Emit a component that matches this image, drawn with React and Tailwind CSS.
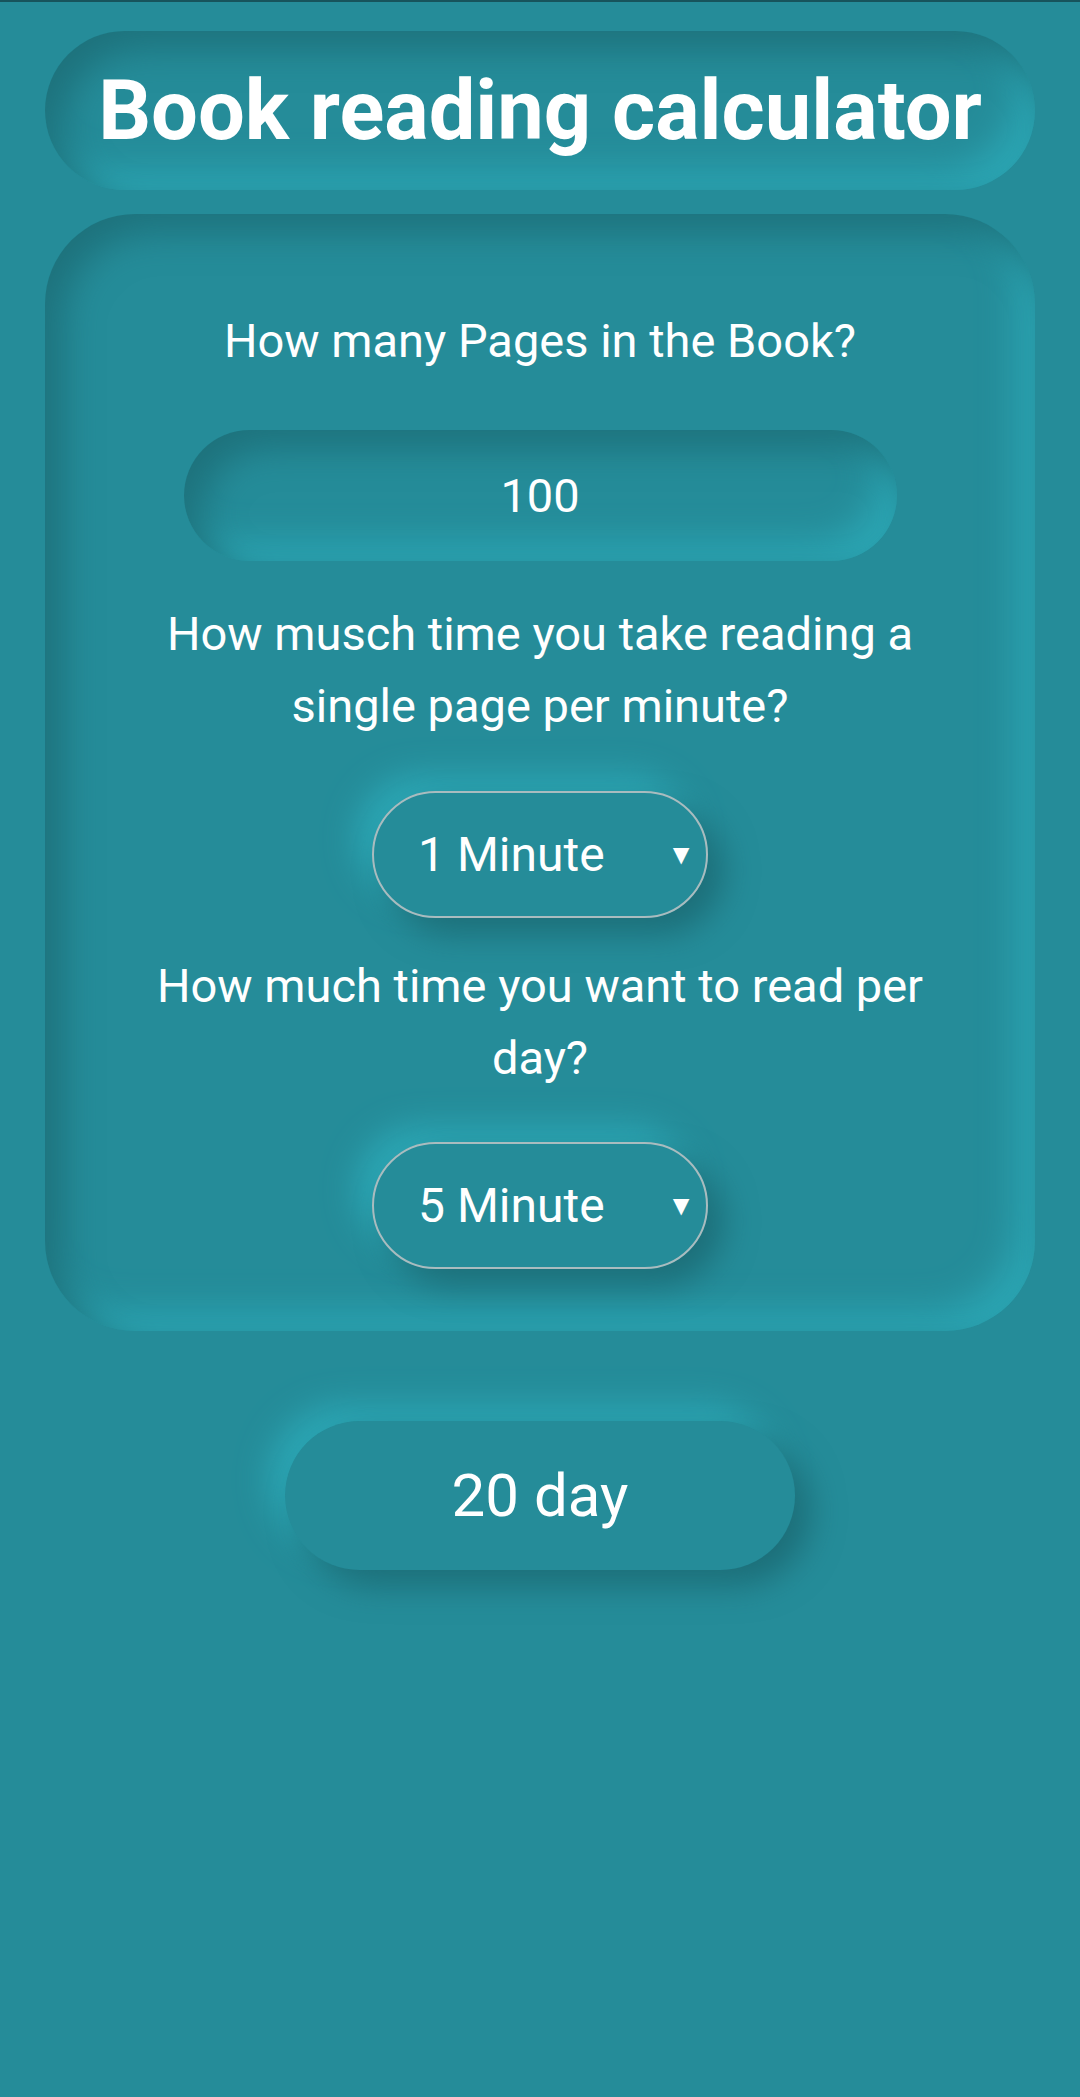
import { useState } from 'react'

const inset = 'shadow-[inset_18px_18px_36px_#1e727c,inset_-18px_-18px_36px_#2ca7b5]'
const raised = 'shadow-[16px_16px_32px_#1d6f79,-16px_-16px_32px_#2ca7b5]'

function Picker({ value, onChange, options }) {
  return (
    <div className={`relative w-[336px] h-[127px] rounded-full border-2 border-[#a9bcbf] ${raised}`}>
      <select
        value={value}
        onChange={e => onChange(Number(e.target.value))}
        className="appearance-none w-full h-full bg-transparent rounded-full pl-[44px] pr-[60px] text-[48px] text-white outline-none"
      >
        {options.map(o => (
          <option key={o} value={o} className="text-black">{o} Minute</option>
        ))}
      </select>
      <span className="pointer-events-none absolute right-[11px] top-1/2 -translate-y-1/2 text-[28px] leading-none text-white">▼</span>
    </div>
  )
}

export default function App() {
  const [pages, setPages] = useState(100)
  const [perPage, setPerPage] = useState(1)
  const [perDay, setPerDay] = useState(5)

  const days = Math.ceil((pages * perPage) / perDay) || 0

  return (
    <div className="min-h-[2097px] bg-[#258c99] border-t-2 border-[#17545c] px-[45px] pt-[29px] font-['Roboto',sans-serif] text-white">
      <div className={`h-[159px] rounded-full flex items-center justify-center ${inset}`}>
        <h1 className="text-[83px] font-bold leading-none">Book reading calculator</h1>
      </div>

      <div className={`mt-[24px] rounded-[90px] pt-[91px] pb-[62px] px-[40px] flex flex-col items-center ${inset}`}>
        <p className="text-[47px] leading-[72px] text-center">How many Pages in the Book?</p>
        <input
          type="number"
          value={pages}
          onChange={e => setPages(Number(e.target.value))}
          className={`mt-[53px] w-[713px] h-[131px] rounded-full bg-transparent text-center text-[47px] text-white outline-none [appearance:textfield] [&::-webkit-inner-spin-button]:appearance-none [&::-webkit-outer-spin-button]:appearance-none ${inset}`}
        />
        <p className="mt-[37px] text-[47px] leading-[72px] text-center w-[800px]">How musch time you take reading a single page per minute?</p>
        <div className="mt-[49px]">
          <Picker value={perPage} onChange={setPerPage} options={[1, 2, 3, 4, 5]} />
        </div>
        <p className="mt-[32px] text-[47px] leading-[72px] text-center w-[800px]">How much time you want to read per day?</p>
        <div className="mt-[48px]">
          <Picker value={perDay} onChange={setPerDay} options={[5, 10, 15, 20, 30, 60]} />
        </div>
      </div>

      <div className="mt-[90px] flex justify-center">
        <div className={`w-[510px] h-[149px] rounded-full flex items-center justify-center text-[60px] ${raised}`}>
          {days} day
        </div>
      </div>
    </div>
  )
}
